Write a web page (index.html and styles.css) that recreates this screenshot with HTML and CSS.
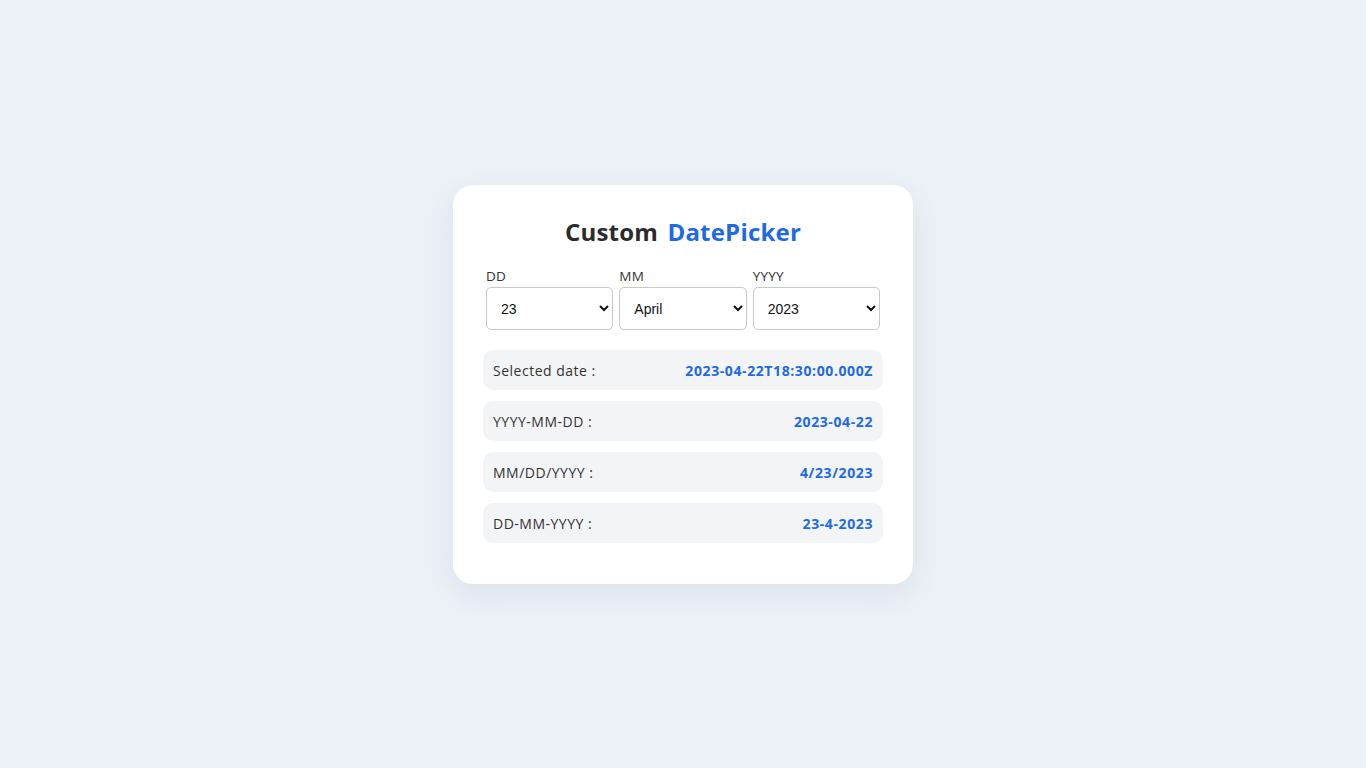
FILE: index.html
```html
<!DOCTYPE html>
<html>
<head>
  <link rel="stylesheet" href="styles.css">
</head>
<body>
  <div class="card">
    <h1 class="title"><span class="dark">Custom</span> <span class="blue">DatePicker</span></h1>
    <div class="pickers">
      <div class="field">
        <label>DD</label>
        <select>
          <option>23</option>
        </select>
      </div>
      <div class="field">
        <label>MM</label>
        <select>
          <option>April</option>
        </select>
      </div>
      <div class="field">
        <label>YYYY</label>
        <select>
          <option>2023</option>
        </select>
      </div>
    </div>
    <div class="results">
      <div class="row"><span class="key">Selected date :</span><span class="val">2023-04-22T18:30:00.000Z</span></div>
      <div class="row"><span class="key">YYYY-MM-DD :</span><span class="val">2023-04-22</span></div>
      <div class="row"><span class="key">MM/DD/YYYY :</span><span class="val">4/23/2023</span></div>
      <div class="row"><span class="key">DD-MM-YYYY :</span><span class="val">23-4-2023</span></div>
    </div>
  </div>
</body>
</html>
```

FILE: styles.css
```css
body {
  margin: 0;
  height: 768px;
  background: #ecf0f7;
  font-family: "Open Sans", "DejaVu Sans", sans-serif;
  display: flex;
  align-items: center;
  justify-content: center;
}
.card {
  width: 400px;
  padding: 30px 30px 41px;
  background: #fff;
  border-radius: 20px;
  box-shadow: 0 10px 30px rgba(40, 60, 100, 0.08);
  margin-top: 1px;
}
.title {
  margin: 0 0 18px;
  text-align: center;
  font-size: 24px;
  font-weight: 700;
  line-height: 34px;
  letter-spacing: 0.2px;
}
.dark {
  color: #2b2b2b;
}
.blue {
  color: #1f6ae2;
  margin-left: 3px;
}
.pickers {
  display: flex;
  gap: 6px;
  padding: 0 3px;
}
.field {
  flex: 1;
  display: flex;
  flex-direction: column;
}
.field label {
  font-size: 13.5px;
  color: #333;
  line-height: 18px;
  margin-bottom: 2px;
  letter-spacing: 0.2px;
}
.field select {
  height: 43px;
  padding: 0 10px;
  font-family: "Liberation Sans", Arial, sans-serif;
  font-size: 14px;
  color: #111;
  background: #fff;
  border: 1px solid #c8c8c8;
  border-radius: 5px;
}
.results {
  margin-top: 20px;
  display: flex;
  flex-direction: column;
  gap: 11px;
}
.row {
  height: 40px;
  padding: 0 10px;
  background: #f3f4f6;
  border-radius: 10px;
  display: flex;
  align-items: center;
  justify-content: space-between;
  font-size: 14px;
  letter-spacing: 0.5px;
}
.key {
  color: #333;
}
.val {
  color: #1f6ae2;
  font-weight: 700;
  letter-spacing: 0.6px;
}
```
